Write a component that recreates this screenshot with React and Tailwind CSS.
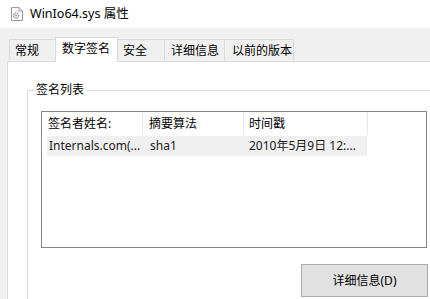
import React from "react";

function FileIcon() {
  return (
    <svg width="12" height="14" viewBox="0 0 12 14" className="shrink-0">
      <path d="M0.5 0.5 H8 L11.5 4 V13.5 H0.5 Z" fill="#ffffff" stroke="#9a9a9a" />
      <path d="M8 0.5 V4 H11.5" fill="#e8e8e8" stroke="#9a9a9a" />
      <circle cx="5" cy="8.5" r="2.6" fill="none" stroke="#8a8a8a" strokeWidth="1.4" strokeDasharray="1.3 0.9" />
      <circle cx="5" cy="8.5" r="1.1" fill="#a0a0a0" />
    </svg>
  );
}

export default function App() {
  return (
    <div className="w-[430px] h-[299px] overflow-hidden bg-[#f0f0f0] font-['Noto_Sans','Noto_Sans_CJK_SC',sans-serif] text-[12px] text-black">
      {/* Title bar */}
      <div className="h-[28px] bg-white flex items-center pl-[11px]">
        <FileIcon />
        <span className="ml-[7px] text-[12.5px] leading-[16px]">WinIo64.sys 属性</span>
      </div>

      {/* Tabs */}
      <div className="pt-[9px] pl-[9px] flex items-end h-[33px]">
        <div className="w-[46px] h-[22px] border-l border-t border-[#d9d9d9] bg-[#f0f0f0] flex items-center pl-[5px] leading-[16px]">常规</div>
        <div className="relative z-10 w-[63px] h-[25px] -mb-px border-l border-t border-r border-[#d9d9d9] bg-white flex items-center pl-[6px] pb-[2px] leading-[16px]">数字签名</div>
        <div className="w-[46px] h-[22px] border-t border-[#d9d9d9] bg-[#f0f0f0] flex items-center pl-[5px] leading-[16px]">安全</div>
        <div className="w-[60px] h-[22px] border-l border-t border-[#d9d9d9] bg-[#f0f0f0] flex items-center pl-[6px] leading-[16px]">详细信息</div>
        <div className="w-[70px] h-[22px] border-l border-t border-r border-[#d9d9d9] bg-[#f0f0f0] flex items-center pl-[7px] leading-[16px]">以前的版本</div>
      </div>

      {/* Panel */}
      <div className="ml-[7px] w-[470px] h-[260px] bg-white border border-[#d9d9d9]">
        <fieldset className="mt-[20px] ml-[19px] w-[430px] h-[220px] border border-[#dcdcdc]">
          <legend className="ml-[6px] px-[2px] leading-[16px]">签名列表</legend>
          <div className="ml-[13px] mt-[13px] w-[386px] h-[137px] border border-[#828790] bg-white">
            <div className="flex h-[23px] leading-[16px]">
              <div className="w-[101px] border-r border-[#e5e5e5] pl-[6px] flex items-center">签名者姓名:</div>
              <div className="w-[101px] border-r border-[#e5e5e5] pl-[6px] flex items-center">摘要算法</div>
              <div className="w-[124px] border-r border-[#e5e5e5] pl-[5px] flex items-center">时间戳</div>
            </div>
            <div className="flex ml-[5px] mt-px w-[320px] h-[20px] bg-[#f0f0f0] leading-[16px] text-[#1a1a1a]">
              <div className="w-[96px] pl-[2px] flex items-center whitespace-nowrap">Internals.com(...</div>
              <div className="w-[101px] pl-[7px] flex items-center">sha1</div>
              <div className="w-[123px] pl-[5px] flex items-center whitespace-nowrap">2010年5月9日 12:...</div>
            </div>
          </div>
          <div className="ml-[273px] mt-[16px]">
            <button className="w-[127px] h-[33px] bg-[#e1e1e1] border border-[#adadad] leading-[16px] text-black">
              详细信息(D)
            </button>
          </div>
        </fieldset>
      </div>
    </div>
  );
}
